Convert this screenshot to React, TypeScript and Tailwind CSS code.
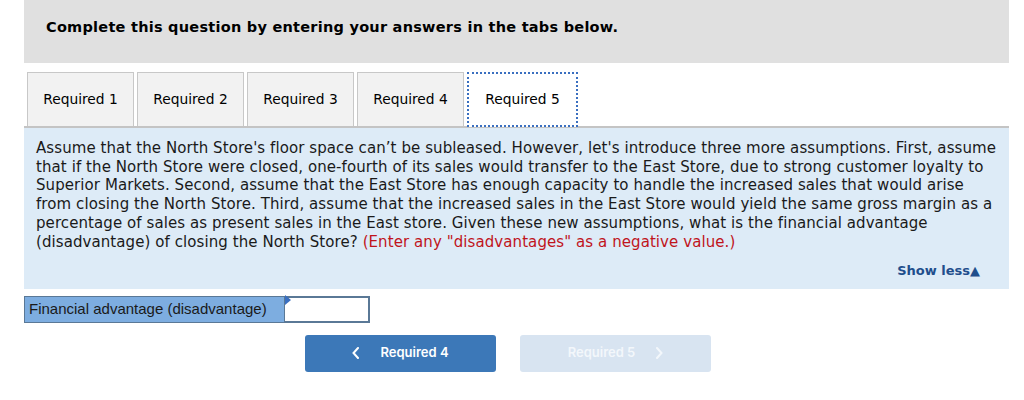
import React from 'react'

const tabs = ['Required 1', 'Required 2', 'Required 3', 'Required 4', 'Required 5']

export default function App() {
  return (
    <div className="w-[1024px] h-[400px] bg-white" style={{ fontFamily: '"DejaVu Sans", Verdana, sans-serif' }}>
      <div className="ml-[24px] w-[985px]">
        <div className="h-[63px] bg-[#e0e0e0] pl-[22px] pt-[17px]">
          <h2 className="text-[14.5px] tracking-[0.25px] font-bold text-black">Complete this question by entering your answers in the tabs below.</h2>
        </div>

        <div className="mt-[9px] flex gap-[3px] pl-[3px] border-b-2 border-[#c4c4c4]">
          {tabs.map((t, i) =>
            i === 4 ? (
              <div
                key={t}
                className="w-[111px] h-[55px] -mb-[2px] flex items-center justify-center bg-white border-2 border-dotted border-[#3a6fc0] text-[13.8px] text-black"
              >
                {t}
              </div>
            ) : (
              <div
                key={t}
                className="w-[107px] h-[54px] flex items-center justify-center bg-[#f2f2f2] border border-b-0 border-[#c8c8c8] text-[13.8px] text-black"
              >
                {t}
              </div>
            )
          )}
        </div>

        <div className="bg-[#ddebf7] pl-[12px] pr-[8px] pt-[11px] pb-[8px]">
          <p className="text-[15px] tracking-[0.08px] leading-[18.7px] text-[#1a1a1a]">
            Assume that the North Store's floor space can’t be subleased. However, let's introduce three more assumptions. First, assume that if the North Store were closed, one-fourth of its sales would transfer to the East Store, due to strong customer loyalty to Superior Markets. Second, assume that the East Store has enough capacity to handle the increased sales that would arise from closing the North Store. Third, assume that the increased sales in the East Store would yield the same gross margin as a percentage of sales as present sales in the East store. Given these new assumptions, what is the financial advantage (disadvantage) of closing the North Store?{' '}
            <span className="text-[#c0141c]">(Enter any "disadvantages" as a negative value.)</span>
          </p>
          <div className="mt-[10px] flex justify-end pr-[21px]">
            <span className="text-[13px] font-bold text-[#1f4e8c]">Show less▲</span>
          </div>
        </div>

        <div className="mt-[7px] flex">
          <div
            className="h-[27px] w-[261px] flex items-center pl-[4px] bg-[#7dade0] border border-[#5a7896] text-[15px] text-[#1a1a1a]"
            style={{ fontFamily: '"Liberation Sans", Arial, sans-serif' }}
          >
            Financial advantage (disadvantage)
          </div>
          <div className="relative h-[27px] w-[85px] bg-white border-2 border-l-0 border-[#5a7896]">
            <div className="absolute left-0 top-0 w-0 h-0 border-t-[5px] border-t-transparent border-l-[6px] border-l-[#3a6fc0] border-b-[5px] border-b-transparent -translate-y-[3px]" />
          </div>
        </div>

        <div className="mt-[12px] ml-[281px] flex gap-[24px]" style={{ fontFamily: 'Inter, "Open Sans", sans-serif' }}>
          <button className="w-[191px] h-[37px] rounded-[3px] bg-[#3c78b8] text-white text-[13px] font-semibold flex items-center justify-center gap-[20px]">
            <svg width="8" height="12" viewBox="0 0 8 12" fill="none" stroke="white" strokeWidth="2" strokeLinecap="round">
              <path d="M6 1L1.5 6L6 11" />
            </svg>
            Required 4
          </button>
          <button className="w-[191px] h-[37px] rounded-[3px] bg-[#d8e4f1] text-[#f3f7fb] text-[13px] font-semibold flex items-center justify-center gap-[20px]">
            Required 5
            <svg width="8" height="12" viewBox="0 0 8 12" fill="none" stroke="#f3f7fb" strokeWidth="2" strokeLinecap="round">
              <path d="M2 1L6.5 6L2 11" />
            </svg>
          </button>
        </div>
      </div>
    </div>
  )
}
